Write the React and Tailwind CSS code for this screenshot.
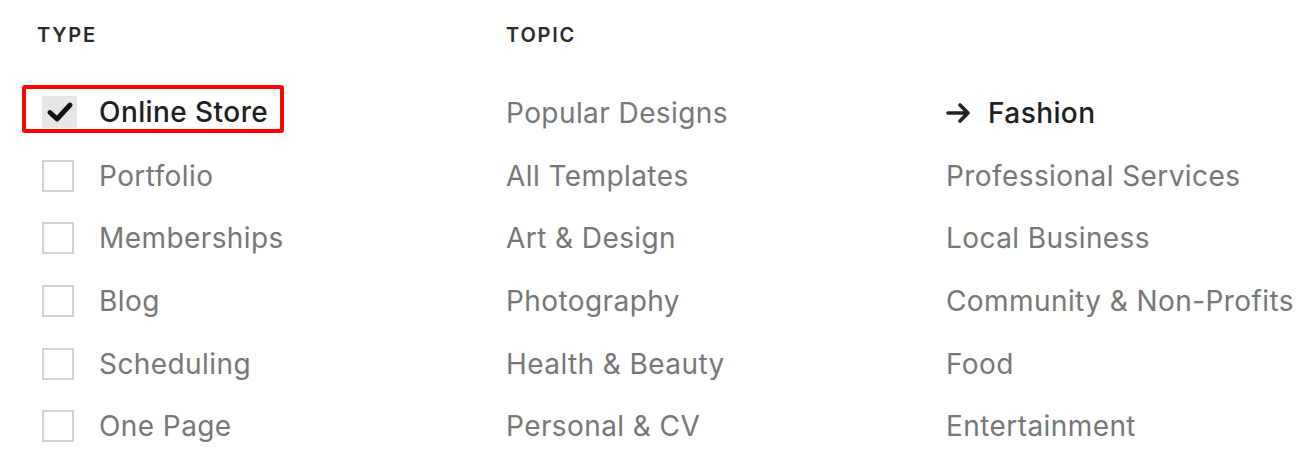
import React from 'react';

const types = [
  { label: 'Online Store', checked: true },
  { label: 'Portfolio' },
  { label: 'Memberships' },
  { label: 'Blog' },
  { label: 'Scheduling' },
  { label: 'One Page' },
];

const topicsA = ['Popular Designs', 'All Templates', 'Art & Design', 'Photography', 'Health & Beauty', 'Personal & CV'];
const topicsB = ['Fashion', 'Professional Services', 'Local Business', 'Community & Non-Profits', 'Food', 'Entertainment'];

function CheckBox({ checked }) {
  if (checked) {
    return (
      <span className="w-[35px] h-[32px] bg-[#e6e6e6] flex items-center justify-center">
        <svg width="26" height="22" viewBox="0 0 26 22">
          <path d="M3 11.5 L10 18 L23 4" fill="none" stroke="#111" strokeWidth="4.8" strokeLinecap="round" strokeLinejoin="round" />
        </svg>
      </span>
    );
  }
  return <span className="w-[32px] h-[32px] border-2 border-[#d2d2d2] bg-white" />;
}

export default function App() {
  return (
    <div className="w-[1316px] h-[470px] bg-white font-['Inter','Liberation_Sans',sans-serif] text-[28px] tracking-[0.015em] flex">
      {/* Type */}
      <div className="w-[506px] pl-[37px] pt-[24px]">
        <h3 className="text-[20px] font-semibold tracking-[0.09em] text-[#2a2a2a] leading-[22px]">TYPE</h3>
        <ul className="mt-[36px]">
          {types.map((t) => (
            <li key={t.label} className="h-[62.6px] flex items-center -ml-[15px]">
              <div className={`flex items-center gap-[22px] h-[48px] pl-[16px] pr-[12px] rounded-[3px] border-4 ${t.checked ? 'border-[#ff0000] -translate-y-[4px]' : 'border-transparent'}`}>
                <span className={`w-[35px] flex ${t.checked ? 'translate-y-[3px]' : ''}`}>
                  <CheckBox checked={t.checked} />
                </span>
                <span className={t.checked ? 'text-[#1e1e1e] font-medium translate-y-[3px]' : 'text-[#777]'}>{t.label}</span>
              </div>
            </li>
          ))}
        </ul>
      </div>

      {/* Topic */}
      <div className="w-[440px] pt-[24px]">
        <h3 className="text-[20px] font-semibold tracking-[0.09em] text-[#2a2a2a] leading-[22px]">TOPIC</h3>
        <ul className="mt-[36px]">
          {topicsA.map((t) => (
            <li key={t} className="h-[62.6px] flex items-center text-[#777]">{t}</li>
          ))}
        </ul>
      </div>

      <div className="flex-1 pt-[24px]">
        <div className="h-[22px]" />
        <ul className="mt-[36px]">
          {topicsB.map((t, i) => (
            <li key={t} className={`h-[62.6px] flex items-center ${i === 0 ? 'text-[#1e1e1e] font-medium' : 'text-[#777]'}`}>
              {i === 0 && (
                <svg width="25" height="22" viewBox="0 0 25 22" className="mr-[17px]">
                  <path d="M2 11 H22 M14 3 L22 11 L14 19" fill="none" stroke="#222" strokeWidth="3.6" strokeLinecap="round" strokeLinejoin="round" />
                </svg>
              )}
              {t}
            </li>
          ))}
        </ul>
      </div>
    </div>
  );
}
